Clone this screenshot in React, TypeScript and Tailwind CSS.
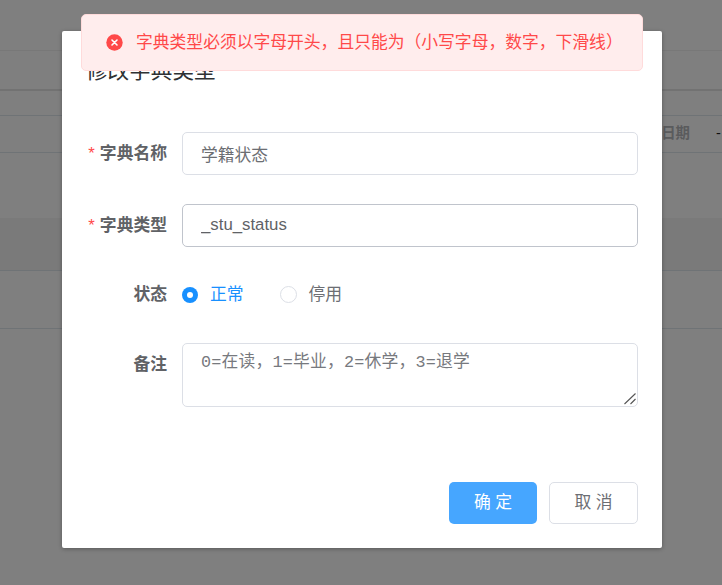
import React from 'react';

const CJK = '"Liberation Sans", "Noto Sans CJK SC", sans-serif';

function FormRow({ label, required, children, className }: { label: string; required?: boolean; children: React.ReactNode; className: string }) {
  return (
    <div className={`flex ${className}`}>
      <label className="w-[96px] shrink-0 pr-[15px] text-right text-[16.8px] font-bold leading-[43px] text-[#606266]">
        {required && <span className="mr-[5px] font-normal text-[#ff4949]">*</span>}
        {label}
      </label>
      <div className="min-w-0 flex-1">{children}</div>
    </div>
  );
}

export default function App() {
  return (
    <div className="relative h-[585px] w-[722px] overflow-hidden bg-white" style={{ fontFamily: CJK }}>
      {/* page behind the dialog */}
      <div className="h-[51px] border-b border-[#f0f0f0]" />
      <div className="h-[40px] border-b-2 border-[#e4e4e4]" />
      <div className="h-[25px] border-b border-[#dfe6ec]" />
      <div className="flex h-[37px] items-center justify-end border-b border-[#dfe6ec] text-[14.4px] font-bold text-[#b4b6ba]">
        <span className="mr-[26px]">日期</span>
        <span className="w-[6px] font-normal text-[#222]">-</span>
      </div>
      <div className="h-[65px]" />
      <div className="h-[53px] border-b border-[#dfe6ec] bg-[#f4f4f5]" />
      <div className="h-[58px] border-b border-[#dfe6ec]" />

      {/* overlay + dialog */}
      <div className="absolute inset-0 bg-black/50">
        <div className="ml-[62px] mt-[31px] flex h-[517px] w-[600px] flex-col rounded-[2px] bg-white px-[24px] shadow-[0_1px_4px_rgba(0,0,0,0.3)]">
          <div className="mt-[27px] h-[26px] text-[21.6px] leading-[26px] text-[#303133]">修改字典类型</div>

          <FormRow label="字典名称" required className="mt-[48px]">
            <input
              readOnly
              value="学籍状态"
              className="h-[43px] w-full rounded-[5px] border border-[#dcdfe6] bg-white px-[18px] text-[16.8px] text-[#6c6e73] outline-none"
            />
          </FormRow>

          <FormRow label="字典类型" required className="mt-[29px]">
            <input
              readOnly
              value="_stu_status"
              className="h-[43px] w-full rounded-[5px] border border-[#c0c4cc] bg-white px-[18px] pb-[2px] text-[16.8px] text-[#606266] outline-none"
            />
          </FormRow>

          <FormRow label="状态" className="mt-[26px]">
            <div className="flex h-[43px] items-center text-[16.8px] text-[#6c6e73]">
              <span className="flex h-[16px] w-[16px] items-center justify-center rounded-full bg-[#1890ff]">
                <span className="h-[6px] w-[6px] rounded-full bg-white" />
              </span>
              <span className="ml-[12px] text-[#1890ff]">正常</span>
              <span className="ml-[36px] h-[17px] w-[17px] rounded-full border border-[#dcdfe6] bg-white" />
              <span className="ml-[12px]">停用</span>
            </div>
          </FormRow>

          <FormRow label="备注" className="mt-[27px]">
            <div className="relative">
              <textarea
                readOnly
                value="0=在读，1=毕业，2=休学，3=退学"
                className="block h-[64px] w-full resize-none rounded-[5px] border border-[#dcdfe6] bg-white px-[18px] pb-[5px] pt-[9px] text-[16.8px] leading-[1.2] tracking-[0.2px] text-[#77797e] outline-none"
                style={{ fontFamily: '"Liberation Mono", "Noto Sans CJK SC", monospace' }}
              />
              {/* resize grip */}
              <svg width="12" height="12" viewBox="0 0 12 12" className="absolute bottom-[2px] right-[2px]">
                <path d="M0.5 11L11.5 0.5M6.5 11L11.5 6" stroke="#555" strokeWidth="1.1" fill="none" />
              </svg>
            </div>
          </FormRow>

          <div className="mt-[75px] flex justify-end gap-[12px]">
            <button className="h-[42px] w-[88px] rounded-[5px] bg-[#46a6ff] text-[16.8px] text-white">确 定</button>
            <button className="h-[42px] w-[89px] rounded-[5px] border border-[#dcdfe6] bg-white text-[16.8px] text-[#6c6e73]">取 消</button>
          </div>
        </div>
      </div>

      {/* error message */}
      <div className="absolute left-[81px] top-[14px] flex h-[57px] w-[562px] items-center rounded-[5px] border border-[#ffdbdb] bg-[#ffeded] pl-[24px]">
        <svg width="17" height="17" viewBox="0 0 17 17" className="shrink-0">
          <circle cx="8.5" cy="8.5" r="8.2" fill="#ff4949" />
          <path d="M6 6l5 5M11 6l-5 5" stroke="#fff" strokeWidth="1.6" strokeLinecap="round" />
        </svg>
        <span className="ml-[13px] text-[16.8px] text-[#ff4949]">字典类型必须以字母开头，且只能为（小写字母，数字，下滑线）</span>
      </div>
    </div>
  );
}
